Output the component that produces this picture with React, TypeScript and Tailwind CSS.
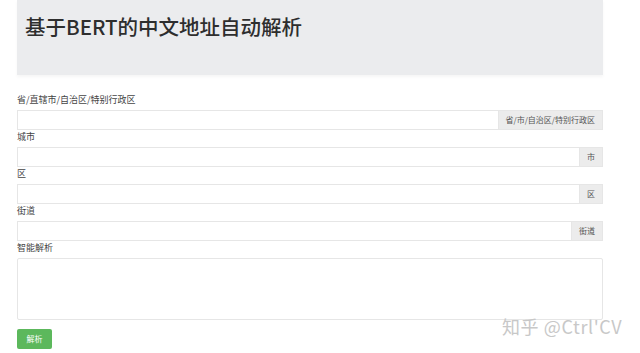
import React from "react";

const font = { fontFamily: '"Noto Sans CJK SC", "Noto Sans", sans-serif' };

function Field({ label, addon }: { label: string; addon: string }) {
  return (
    <div>
      <div className="text-[9px] leading-[14px] text-[#444] mb-[3px]">{label}</div>
      <div className="flex h-[20px]">
        <div className="flex-1 border border-[#e6e6e6] bg-white" />
        <div className="flex items-center px-[7px] bg-[#ececec] border border-l-0 border-[#e6e6e6] text-[8px] text-[#555]">
          {addon}
        </div>
      </div>
    </div>
  );
}

export default function App() {
  return (
    <div className="w-[640px] h-[353px] bg-white overflow-hidden relative" style={font}>
      <div className="mx-[17px] w-[586px]">
        <div className="h-[75px] bg-[#ebecee] px-[8px] pt-[12px] shadow-[0_2px_3px_rgba(0,0,0,0.04)]">
          <h1 className="text-[20.5px] leading-[28px] font-medium text-[#2e2e2e]">
            基于BERT的中文地址自动解析
          </h1>
        </div>
        <div className="pt-[18px]">
          <Field label="省/直辖市/自治区/特别行政区" addon="省/市/自治区/特别行政区" />
          <Field label="城市" addon="市" />
          <Field label="区" addon="区" />
          <Field label="街道" addon="街道" />
          <div className="text-[9px] leading-[14px] text-[#444] mb-[3px]">智能解析</div>
          <div className="h-[62px] border border-[#e6e6e6] rounded-[2px] bg-white" />
          <button className="mt-[9px] h-[20px] w-[35px] bg-[#5cb85c] rounded-[2px] text-white text-[8px] flex items-center justify-center">
            解析
          </button>
        </div>
      </div>
      <div className="absolute left-[502px] top-[314px] text-[18px] leading-[24px] text-[#c8c8c8] tracking-[0.6px]">
        知乎 @Ctrl'CV
      </div>
    </div>
  );
}
